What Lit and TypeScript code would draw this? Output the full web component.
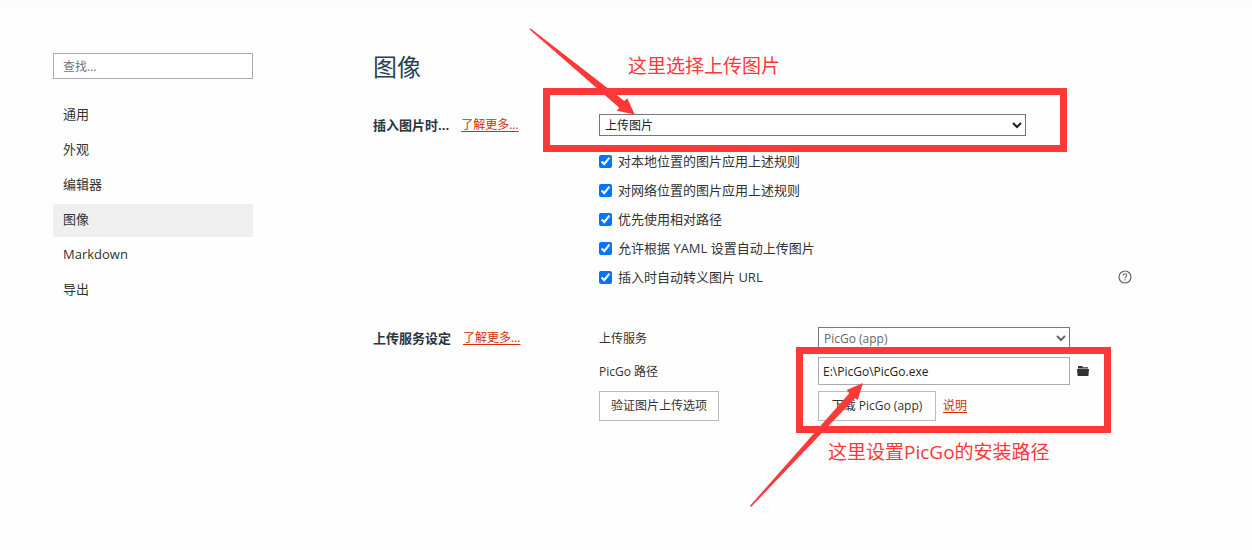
import { LitElement, html, svg, css } from "lit";
import { customElement, state } from "lit/decorators.js";

const SECTIONS = ["通用", "外观", "编辑器", "图像", "Markdown", "导出"];

const RULES = [
  "对本地位置的图片应用上述规则",
  "对网络位置的图片应用上述规则",
  "优先使用相对路径",
  "允许根据 YAML 设置自动上传图片",
  "插入时自动转义图片 URL",
];

const helpIcon = svg`
  <circle cx="7" cy="7" r="6" fill="none" stroke="#666" stroke-width="1.2" />
  <path d="M5.2 5.5C5.2 4.4 6 3.8 7 3.8s1.8.6 1.8 1.6C8.8 6.6 7 6.700 7 8.200" fill="none" stroke="#666" stroke-width="1.1" />
  <rect x="6.400" y="9.300" width="1.200" height="1.200" fill="#666" />`;

@customElement("app-root")
export class AppRoot extends LitElement {
  @state() private active = "图像";

  static styles = css`
    :host {
      display: block;
      min-height: 100vh;
      box-sizing: border-box;
      padding: 53px 119px 40px 53px;
      background: linear-gradient(#fafafa, #fefefe 14px);
      color: #333;
      font: 13px/20px "Open Sans", "Noto Sans CJK SC", sans-serif;
    }
    * {
      box-sizing: border-box;
    }
    .layout {
      display: flex;
      align-items: flex-start;
      gap: 120px;
    }
    .sidebar {
      flex: 0 0 200px;
    }
    .search {
      display: block;
      width: 100%;
      height: 26px;
      margin-bottom: 20px;
      padding: 0 9px;
      border: 1px solid #aaa;
      border-radius: 0;
      background: #fff;
      font: inherit;
      font-size: 12px;
    }
    .search::placeholder {
      color: #757575;
    }
    .nav {
      display: flex;
      flex-direction: column;
      gap: 2px;
    }
    .nav-item {
      height: 33px;
      padding: 0 10px 3px;
      border: 0;
      border-radius: 2px;
      background: transparent;
      color: inherit;
      font: inherit;
      text-align: left;
    }
    .nav-item.active {
      background: #efefef;
    }
    .main {
      flex: 1;
      min-width: 0;
    }
    .title {
      margin: 0 0 34px;
      color: #2c3e50;
      font-size: 24px;
      font-weight: 400;
      line-height: 27px;
    }
    .section {
      display: grid;
      grid-template-columns: 214px 1fr;
      column-gap: 12px;
      margin-bottom: 40px;
    }
    .heading {
      display: flex;
      align-items: center;
      gap: 12px;
      height: 22px;
    }
    .heading h2 {
      margin: 0;
      color: #2c3440;
      font-size: 13px;
      font-weight: 700;
    }
    .link {
      color: #d62e00;
      font-size: 12px;
      text-underline-offset: 2px;
    }
    .select {
      display: block;
      width: 100%;
      height: 22px;
      padding: 0 1px;
      border: 1px solid #767676;
      border-radius: 0;
      background-color: #fff;
      color: #222;
      font: inherit;
      font-size: 12px;
    }
    .select.muted {
      color: #666;
    }
    .target {
      position: relative;
      width: 80%;
      margin-bottom: 15px;
    }
    .rules {
      display: flex;
      flex-direction: column;
      gap: 9px;
    }
    .rule {
      display: flex;
      align-items: center;
      justify-content: space-between;
    }
    .rule label {
      display: flex;
      align-items: center;
      gap: 6px;
    }
    .rule input {
      width: 13px;
      height: 13px;
      margin: 0;
    }
    .help {
      display: flex;
      padding: 0 1px;
      border: 0;
      background: none;
    }
    .service {
      position: relative;
      display: grid;
      grid-template-columns: 219px 252px 1fr;
      align-items: center;
      font-size: 12px;
    }
    .service .select {
      margin-bottom: 8px;
    }
    .service label {
      padding-top: 2px;
    }
    .service .select-label {
      margin-bottom: 8px;
    }
    .path {
      width: 100%;
      height: 28px;
      padding: 0 4px;
      border: 1px solid #aaa;
      border-radius: 0;
      color: #222;
      font: inherit;
    }
    .folder {
      display: flex;
      width: 26px;
      padding: 0 7px;
      border: 0;
      background: none;
    }
    .actions {
      display: flex;
      align-items: center;
      gap: 7px;
      margin-top: 6px;
    }
    .button {
      min-width: 118px;
      height: 30px;
      padding: 0 11px;
      border: 1px solid #bbb;
      background: #fff;
      color: #333;
      font: inherit;
      white-space: nowrap;
    }
    .frame {
      position: absolute;
      border: 7px solid #fc3838;
      pointer-events: none;
    }
    .frame.first {
      inset: -26px -41px -16px -56px;
    }
    .frame.second {
      left: 197px;
      top: 20px;
      width: 315px;
      height: 86px;
    }
    .arrow {
      position: absolute;
      fill: #fc3838;
      pointer-events: none;
    }
    .arrow.first {
      left: -70px;
      top: -86px;
    }
    .arrow.second {
      left: 150px;
      top: 54px;
    }
    .note {
      position: absolute;
      color: #fc3838;
      font-size: 19px;
      line-height: 28px;
      white-space: nowrap;
    }
    .note.first {
      left: 29px;
      top: -62px;
    }
    .note.second {
      left: 229px;
      top: 111px;
    }
  `;

  render() {
    return html`
      <div class="layout">
        <aside class="sidebar">
          <input class="search" type="search" placeholder="查找..." aria-label="查找" />
          <nav class="nav">
            ${SECTIONS.map(
              (name) => html`<button
                class="nav-item ${name === this.active ? "active" : ""}"
                @click=${() => (this.active = name)}
              >${name}</button>`
            )}
          </nav>
        </aside>

        <main class="main">
          <h1 class="title">图像</h1>

          <section class="section">
            <div class="heading">
              <h2 id="insert">插入图片时...</h2>
              <a class="link" href="#">了解更多...</a>
            </div>
            <div>
              <div class="target">
                <select class="select" aria-labelledby="insert">
                  <option>上传图片</option>
                </select>
                <div class="frame first"></div>
                <svg class="arrow first" width="108" height="90" viewBox="0 0 108 90">
                  <path d="M.6 1.400L1.600.6L95.300 73L98.300 70.300L105.700 86.500L87.700 82.700L90.300 79.700Z" />
                </svg>
                <div class="note first">这里选择上传图片</div>
              </div>
              <div class="rules">
                ${RULES.map(
                  (text, i) => html`<div class="rule">
                    <label><input type="checkbox" checked />${text}</label>
                    ${i === RULES.length - 1
                      ? html`<button class="help" aria-label="帮助">
                          <svg width="14" height="14" viewBox="0 0 14 14">${helpIcon}</svg>
                        </button>`
                      : null}
                  </div>`
                )}
              </div>
            </div>
          </section>

          <section class="section">
            <div class="heading">
              <h2>上传服务设定</h2>
              <a class="link" href="#">了解更多...</a>
            </div>
            <div class="service">
              <label class="select-label" for="service">上传服务</label>
              <select class="select muted" id="service">
                <option>PicGo (app)</option>
              </select>
              <span></span>

              <label for="path">PicGo 路径</label>
              <input class="path" id="path" type="text" value="E:\\PicGo\\PicGo.exe" />
              <button class="folder" aria-label="选择文件">
                <svg width="12" height="10" viewBox="0 0 12 10">
                  <path d="M1 0h4l1 1.200h5v1.300H1z" fill="#333" />
                  <path d="M0 3h12l-.6 7H.6z" fill="#333" />
                </svg>
              </button>

              <div class="actions"><button class="button">验证图片上传选项</button></div>
              <div class="actions">
                <button class="button">下载 PicGo (app)</button>
                <a class="link" href="#">说明</a>
              </div>

              <div class="frame second"></div>
              <svg class="arrow second" width="116" height="128" viewBox="0 0 116 128">
                <path d="M.8 125L100.300 12.300L97.700 9L114 2L108.700 19L106 17.300L2 126Z" />
              </svg>
              <div class="note second">这里设置PicGo的安装路径</div>
            </div>
          </section>
        </main>
      </div>
    `;
  }
}
